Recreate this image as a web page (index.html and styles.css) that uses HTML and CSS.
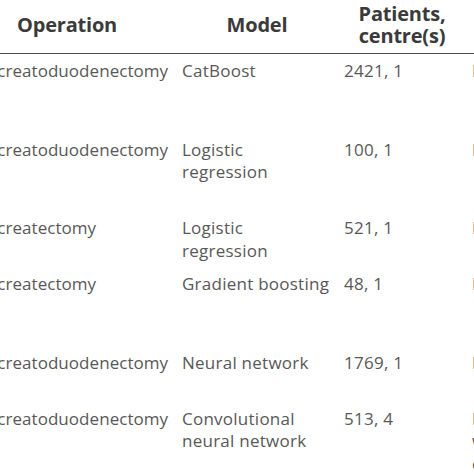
FILE: index.html
```html
<!DOCTYPE html>
<html lang="en">
<head>
<meta charset="utf-8">
<title>Models table</title>
<link rel="stylesheet" href="styles.css">
</head>
<body>
<table class="models">
  <colgroup>
    <col class="c-op">
    <col class="c-model">
    <col class="c-pat">
    <col class="c-out">
  </colgroup>
  <thead>
    <tr>
      <th>Operation</th>
      <th>Model</th>
      <th>Patients,<br>centre(s)</th>
      <th>Outcome</th>
    </tr>
  </thead>
  <tbody>
    <tr>
      <td>Pancreatoduodenectomy</td>
      <td>CatBoost</td>
      <td>2421, 1</td>
      <td>Postoperative<br>&nbsp;&nbsp;pancreatic<br>&nbsp;&nbsp;fistula</td>
    </tr>
    <tr>
      <td>Pancreatoduodenectomy</td>
      <td>Logistic regression</td>
      <td>100, 1</td>
      <td>Postoperative<br>&nbsp;&nbsp;pancreatic<br>&nbsp;&nbsp;fistula</td>
    </tr>
    <tr>
      <td>Pancreatectomy</td>
      <td>Logistic regression</td>
      <td>521, 1</td>
      <td>Postoperative<br>&nbsp;&nbsp;mortality</td>
    </tr>
    <tr>
      <td>Pancreatectomy</td>
      <td>Gradient boosting</td>
      <td>48, 1</td>
      <td>Postoperative<br>&nbsp;&nbsp;pancreatic<br>&nbsp;&nbsp;fistula</td>
    </tr>
    <tr>
      <td>Pancreatoduodenectomy</td>
      <td>Neural network</td>
      <td>1769, 1</td>
      <td>Postoperative<br>&nbsp;&nbsp;mortality</td>
    </tr>
    <tr>
      <td>Pancreatoduodenectomy</td>
      <td>Convolutional neural network</td>
      <td>513, 4</td>
      <td>Pancreatic fistula<br>with vascular<br>complications</td>
    </tr>
  </tbody>
</table>
</body>
</html>
```
FILE: styles.css
```css
html, body {
  margin: 0;
  padding: 0;
  background: #ffffff;
  overflow: hidden;
}

.models {
  border-collapse: collapse;
  table-layout: fixed;
  width: 708px;
  margin-left: -42px;
  font-family: "Open Sans", "DejaVu Sans", sans-serif;
  color: #585858;
}

.c-op { width: 218px; }
.c-model { width: 162px; }
.c-pat { width: 128px; }
.c-out { width: 200px; }

.models th {
  font-weight: 700;
  font-size: 20px;
  line-height: 22px;
  letter-spacing: -0.2px;
  color: #3a3a3a;
  text-align: center;
  vertical-align: middle;
  padding: 3px 6px 6px;
  border-bottom: 1.5px solid #4a4a4a;
}

.models td {
  font-size: 17px;
  line-height: 22.5px;
  letter-spacing: 0.25px;
  text-align: left;
  vertical-align: top;
  padding: 6px 6px 5px;
}

.models td:first-child {
  white-space: nowrap;
  letter-spacing: 0.05px;
  padding-left: 9px;
}
```
